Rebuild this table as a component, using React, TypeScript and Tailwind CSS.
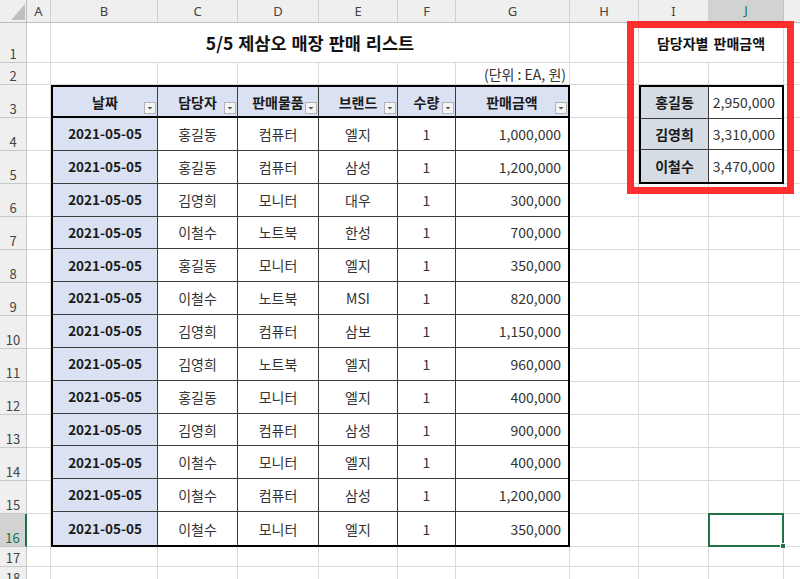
import React from "react"

const cols = ["A", "B", "C", "D", "E", "F", "G", "H", "I", "J", ""]

const sales = [
  ["홍길동", "컴퓨터", "엘지", "1,000,000"],
  ["홍길동", "컴퓨터", "삼성", "1,200,000"],
  ["김영희", "모니터", "대우", "300,000"],
  ["이철수", "노트북", "한성", "700,000"],
  ["홍길동", "모니터", "엘지", "350,000"],
  ["이철수", "노트북", "MSI", "820,000"],
  ["김영희", "컴퓨터", "삼보", "1,150,000"],
  ["김영희", "노트북", "엘지", "960,000"],
  ["홍길동", "모니터", "엘지", "400,000"],
  ["김영희", "컴퓨터", "삼성", "900,000"],
  ["이철수", "모니터", "엘지", "400,000"],
  ["이철수", "컴퓨터", "삼성", "1,200,000"],
  ["이철수", "모니터", "엘지", "350,000"],
]

const summary = [
  ["홍길동", "2,950,000"],
  ["김영희", "3,310,000"],
  ["이철수", "3,470,000"],
]

function Blank({ children, className = "" }: { children?: React.ReactNode; className?: string }) {
  return <div className={`border-r border-b border-[#dadada] bg-white ${className}`}>{children}</div>
}

function RowHead({ n, active = false }: { n: number; active?: boolean }) {
  return (
    <div
      className={
        active
          ? "flex items-end justify-center pb-[2px] bg-[#d2d2d2] border-b border-[#c4c4c4] border-r-2 border-r-[#217346] text-[#217346] text-[13px] leading-none"
          : "flex items-end justify-center pb-[2px] bg-[#efefef] border-b border-r border-[#c8c8c8] text-[#444] text-[13px] leading-none"
      }
    >
      {n}
    </div>
  )
}

function FilterBtn() {
  return (
    <svg className="absolute right-[1px] bottom-[2px]" width="12" height="12" viewBox="0 0 12 12">
      <rect x="0.5" y="0.5" width="11" height="11" fill="#f4f4f4" stroke="#b3b3b3" />
      <path d="M3.5 5 H8.5 L6 7.5 Z" fill="#555" />
    </svg>
  )
}

function SalesTable() {
  const heads = ["날짜", "담당자", "판매물품", "브랜드", "수량", "판매금액"]
  return (
    <div className="col-span-6 row-span-14 border-2 border-black bg-white grid grid-cols-[105px_80px_81px_79px_58px_1fr] grid-rows-[31px_repeat(13,1fr)]">
      {heads.map((h, i) => (
        <div
          key={h}
          className={`relative flex items-center justify-center bg-[#d9e1f2] border-b-2 border-b-black font-bold text-[14px] text-[#1a1a1a] ${
            i < 5 ? "border-r border-r-[#3c3c3c]" : ""
          }`}
        >
          {h}
          <FilterBtn />
        </div>
      ))}
      {sales.map((r, ri) => {
        const last = ri === sales.length - 1
        const b = last ? "" : "border-b border-b-[#3c3c3c]"
        return (
          <React.Fragment key={ri}>
            <div className={`flex items-center justify-center bg-[#d9e1f2] border-r border-r-[#3c3c3c] font-bold text-[13.5px] text-[#1a1a1a] ${b}`}>
              2021-05-05
            </div>
            <div className={`flex items-center justify-center border-r border-r-[#3c3c3c] text-[14px] text-[#333] ${b}`}>{r[0]}</div>
            <div className={`flex items-center justify-center border-r border-r-[#3c3c3c] text-[14px] text-[#333] ${b}`}>{r[1]}</div>
            <div className={`flex items-center justify-center border-r border-r-[#3c3c3c] text-[14px] text-[#333] ${b}`}>{r[2]}</div>
            <div className={`flex items-center justify-center border-r border-r-[#3c3c3c] text-[14px] text-[#333] ${b}`}>1</div>
            <div className={`flex items-center justify-end pr-[7px] text-[14px] text-[#333] ${b}`}>{r[3]}</div>
          </React.Fragment>
        )
      })}
    </div>
  )
}

function SummaryTable() {
  return (
    <div className="col-span-2 row-span-3 border-2 border-black bg-white grid grid-cols-[68px_1fr] grid-rows-3">
      {summary.map((s, i) => {
        const b = i < 2 ? "border-b border-b-[#3c3c3c]" : ""
        return (
          <React.Fragment key={s[0]}>
            <div className={`flex items-center justify-center bg-[#d6dce4] border-r border-r-[#3c3c3c] font-bold text-[14px] text-[#1a1a1a] ${b}`}>
              {s[0]}
            </div>
            <div className={`flex items-center justify-end pr-[7px] text-[14px] text-[#333] ${b}`}>{s[1]}</div>
          </React.Fragment>
        )
      })}
    </div>
  )
}

export default function App() {
  return (
    <div className="relative w-[800px] h-[579px] overflow-hidden bg-white font-['Noto_Sans_CJK_KR',sans-serif] leading-none">
      <div className="grid grid-cols-[27px_24px_107px_80px_81px_79px_58px_114px_69px_70px_75px_70px] grid-rows-[23px_40px_22px_33px_repeat(13,33px)_20px_20px]">
        {/* column headers */}
        <div className="relative bg-[#efefef] border-r border-b border-[#bdbdbd]">
          <svg className="absolute left-[11px] top-[4px]" width="15" height="16" viewBox="0 0 15 16">
            <path d="M14 0 V16 H0 Z" fill="#bfbfbf" />
          </svg>
        </div>
        {cols.map((c, i) => (
          <div
            key={i}
            className={
              c === "J"
                ? "flex items-center justify-center bg-[#d2d2d2] border-r border-r-[#c4c4c4] border-b-2 border-b-[#217346] text-[13px] text-[#217346] font-['Noto_Sans',sans-serif]"
                : "flex items-center justify-center bg-[#efefef] border-r border-r-[#d0d0d0] border-b border-b-[#bdbdbd] text-[13px] text-[#444] font-['Noto_Sans',sans-serif]"
            }
          >
            {c}
          </div>
        ))}

        {/* row 1 */}
        <RowHead n={1} />
        <Blank />
        <div className="col-span-6 flex items-center justify-center border-r border-b border-[#dadada] font-bold text-[17.5px] text-[#111] [word-spacing:1px]">
          5/5 제삼오 매장 판매 리스트
        </div>
        <Blank />
        <div className="col-span-2 flex items-center justify-center border-r border-b border-[#dadada] font-bold text-[14px] text-[#111] [word-spacing:2px]">
          담당자별 판매금액
        </div>
        <Blank />

        {/* row 2 */}
        <RowHead n={2} />
        <Blank />
        <Blank />
        <Blank />
        <Blank />
        <Blank />
        <Blank />
        <Blank className="flex items-end justify-end pr-[3px] pb-[3px] text-[14px] text-[#333]">(단위 : EA, 원)</Blank>
        <Blank />
        <Blank />
        <Blank />
        <Blank />

        {/* row 3 */}
        <RowHead n={3} />
        <Blank />
        <SalesTable />
        <Blank />
        <SummaryTable />
        <Blank />

        {/* rows 4-5 */}
        {[4, 5].map((n) => (
          <React.Fragment key={n}>
            <RowHead n={n} />
            <Blank />
            <Blank />
            <Blank />
          </React.Fragment>
        ))}

        {/* rows 6-15 */}
        {[6, 7, 8, 9, 10, 11, 12, 13, 14, 15].map((n) => (
          <React.Fragment key={n}>
            <RowHead n={n} />
            <Blank />
            <Blank />
            <Blank />
            <Blank />
            <Blank />
          </React.Fragment>
        ))}

        {/* row 16 */}
        <RowHead n={16} active />
        <Blank />
        <Blank />
        <Blank />
        <div className="relative border-2 border-[#217346] bg-white -ml-[1px] -mt-[1px]">
          <span className="absolute -right-[4px] -bottom-[4px] w-[6px] h-[6px] bg-[#217346] border border-white" />
        </div>
        <Blank />

        {/* rows 17-18 */}
        {[17, 18].map((n) => (
          <React.Fragment key={n}>
            <RowHead n={n} />
            {cols.map((c, i) => (
              <Blank key={i} />
            ))}
          </React.Fragment>
        ))}
      </div>

      {/* red highlight box */}
      <div className="absolute left-[627px] top-[21px] w-[167px] h-[173px] border-[7px] border-[#ff2424]/95 pointer-events-none" />
    </div>
  )
}
